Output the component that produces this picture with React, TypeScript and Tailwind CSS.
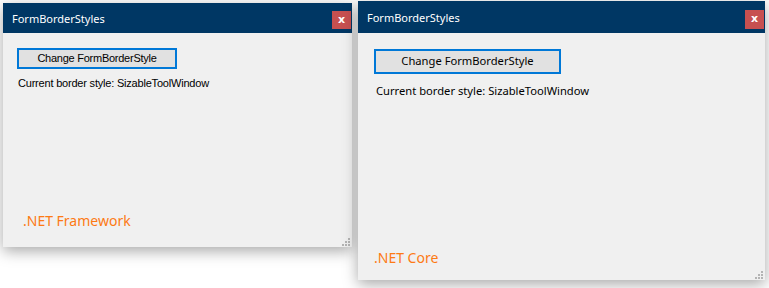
import React from "react";

function Grip() {
  const dot = "w-[2px] h-[2px] bg-[#b4b4b4]";
  return (
    <div className="absolute right-[2px] bottom-[1px] grid grid-cols-3 gap-[1px]">
      <div />
      <div />
      <div className={dot} />
      <div />
      <div className={dot} />
      <div className={dot} />
      <div className={dot} />
      <div className={dot} />
      <div className={dot} />
    </div>
  );
}

function Window({
  w,
  h,
  titleH,
  closeTop,
  closeH,
  btnW,
  btnH,
  btnMl,
  btnMt,
  btnFont,
  labelFont,
  labelMl,
  labelMt,
  footer,
  footerMl,
  footerMb,
  className,
}: {
  w: string;
  h: string;
  titleH: string;
  closeTop: string;
  closeH: string;
  btnW: string;
  btnH: string;
  btnMl: string;
  btnMt: string;
  btnFont: string;
  labelFont: string;
  labelMl: string;
  labelMt: string;
  footer: string;
  footerMl: string;
  footerMb: string;
  className: string;
}) {
  return (
    <div
      className={`relative flex flex-col bg-[#f0f0f0] shadow-[0_4px_14px_rgba(0,0,0,0.35)] ${w} ${h} ${className}`}
    >
      <div className={`relative flex items-center bg-[#003764] pl-[9px] ${titleH}`}>
        <span
          className="text-white text-[11px] leading-none"
          style={{ fontFamily: '"Noto Sans", sans-serif' }}
        >
          FormBorderStyles
        </span>
        <div
          className={`absolute right-[1px] w-[19px] ${closeTop} ${closeH} bg-[#c75050] flex items-center justify-center`}
        >
          <span
            className="text-white text-[11px] font-bold leading-none pb-[2px]"
            style={{ fontFamily: '"DejaVu Sans", sans-serif' }}
          >
            x
          </span>
        </div>
      </div>
      <div className="flex flex-col items-start flex-1">
        <div
          className={`flex items-center justify-center border-2 border-[#0078d7] bg-[#e1e1e1] text-black ${btnW} ${btnH} ${btnMl} ${btnMt} ${btnFont}`}
        >
          Change FormBorderStyle
        </div>
        <div className={`text-black leading-none ${labelFont} ${labelMl} ${labelMt}`}>
          Current border style: SizableToolWindow
        </div>
        <div
          className={`mt-auto text-[#fd7a14] text-[14px] leading-none ${footerMl} ${footerMb}`}
          style={{ fontFamily: '"Noto Sans", sans-serif' }}
        >
          {footer}
        </div>
      </div>
      <Grip />
    </div>
  );
}

export default function App() {
  return (
    <div className="w-[769px] h-[288px] bg-white flex items-start overflow-hidden">
      <Window
        className="ml-[3px] mt-[3px]"
        w="w-[349px]"
        h="h-[244px]"
        titleH="h-[30px]"
        closeTop="top-[8px]"
        closeH="h-[18px]"
        btnW="w-[160px]"
        btnH="h-[21px]"
        btnMl="ml-[14px]"
        btnMt="mt-[15px]"
        btnFont="text-[11px] tracking-[-0.25px] font-['Liberation_Sans',sans-serif]"
        labelFont="text-[11px] tracking-[-0.2px] font-['Liberation_Sans',sans-serif]"
        labelMl="ml-[15px]"
        labelMt="mt-[9px]"
        footer=".NET Framework"
        footerMl="ml-[20px]"
        footerMb="mb-[19px]"
      />
      <Window
        className="ml-[6px] mt-[1px]"
        w="w-[407px]"
        h="h-[279px]"
        titleH="h-[32px]"
        closeTop="top-[9px]"
        closeH="h-[19px]"
        btnW="w-[187px]"
        btnH="h-[25px]"
        btnMl="ml-[16px]"
        btnMt="mt-[16px]"
        btnFont="text-[11.2px] font-['Noto_Sans',sans-serif]"
        labelFont="text-[11.2px] font-['Noto_Sans',sans-serif]"
        labelMl="ml-[18px]"
        labelMt="mt-[11px]"
        footer=".NET Core"
        footerMl="ml-[16px]"
        footerMb="mb-[15px]"
      />
    </div>
  );
}
